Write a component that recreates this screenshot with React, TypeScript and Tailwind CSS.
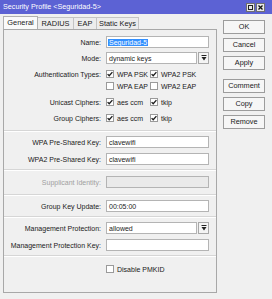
import React from "react";

const Check = ({ checked }: { checked?: boolean }) => (
  <span className="w-[8px] h-[8px] border border-[#9a9a9a] bg-white flex items-center justify-center shrink-0">
    {checked && (
      <svg width="6" height="6" viewBox="0 0 6 6">
        <path d="M0.6 3.1 L2.2 4.7 L5.4 1.1" stroke="#1a1a1a" strokeWidth="1.3" fill="none" />
      </svg>
    )}
  </span>
);

const CheckItem = ({ checked, label, w }: { checked?: boolean; label: string; w?: string }) => (
  <div className={`flex items-center gap-[3px] ${w ?? ""}`}>
    <Check checked={checked} />
    <span>{label}</span>
  </div>
);

const DropBtn = () => (
  <span className="w-[12px] h-[12px] border border-[#a8a8a8] bg-[#f4f4f4] flex items-center justify-center">
    <svg width="6" height="6" viewBox="0 0 6 6">
      <rect x="0.5" y="0" width="5" height="1" fill="#222" />
      <path d="M0.5 2 L5.5 2 L3 5.5 Z" fill="#222" />
    </svg>
  </span>
);

const Row = ({ label, children, h = "h-[12px]", disabled }: { label: string; children?: React.ReactNode; h?: string; disabled?: boolean }) => (
  <div className={`flex items-center ${h}`}>
    <div className={`w-[99px] text-right pr-[2px] ${disabled ? "text-[#a0a0a0]" : ""}`}>{label}</div>
    <div className="ml-[3px] w-[103px] h-full flex items-center">{children}</div>
  </div>
);

const Input = ({ children, disabled }: { children?: React.ReactNode; disabled?: boolean }) => (
  <div className={`w-full h-full border border-[#b4b4b4] flex items-center px-[2px] ${disabled ? "bg-[#eaeaea]" : "bg-white"}`}>
    {children}
  </div>
);

const Sep = ({ mt, mb }: { mt: string; mb: string }) => (
  <div className={`${mt} ${mb} border-t border-[#d6d6d6] border-b border-b-white`} />
);

const Btn = ({ label, mt }: { label: string; mt: string }) => (
  <div className={`${mt} w-[42px] h-[14px] border border-[#9c9c9c] bg-[#f6f6f6] flex items-center justify-center text-[7.3px]`}>{label}</div>
);

export default function App() {
  return (
    <div
      className="w-[272px] h-[299px] bg-[#f0f0f0] text-[7px] text-[#1a1a1a] leading-none overflow-hidden relative"
      style={{ fontFamily: "'Liberation Sans', Arial, sans-serif" }}
    >
      <div className="h-[14px] bg-[#5c62d4] flex items-center justify-between px-[3px]">
        <span className="text-white text-[7.2px]">Security Profile &lt;Seguridad-5&gt;</span>
        <div className="flex gap-[1px] mr-[4px]">
          <span className="w-[9px] h-[9px] bg-[#e8e8e8] border border-[#707070] flex items-center justify-center">
            <span className="w-[5px] h-[5px] border border-[#222]" />
          </span>
          <span className="w-[9px] h-[9px] bg-[#e8e8e8] border border-[#707070] flex items-center justify-center">
            <svg width="5" height="5" viewBox="0 0 5 5">
              <path d="M0.5 0.5 L4.5 4.5 M4.5 0.5 L0.5 4.5" stroke="#111" strokeWidth="1.3" />
            </svg>
          </span>
        </div>
      </div>
      <div className="flex">
        <div className="ml-[3px] w-[214px]">
          <div className="mt-[2px] h-[13px] flex items-end text-[7.4px]">
            <div className="h-[13px] w-[35px] bg-[#fafafa] border border-b-0 border-[#b0b0b0] flex items-center justify-center">General</div>
            <div className="h-[12px] w-[36px] bg-[#ececec] border-t border-r border-[#c4c4c4] flex items-center justify-center">RADIUS</div>
            <div className="h-[12px] w-[23px] bg-[#ececec] border-t border-r border-[#c4c4c4] flex items-center justify-center">EAP</div>
            <div className="h-[12px] w-[42px] bg-[#ececec] border-t border-r border-[#c4c4c4] flex items-center justify-center">Static Keys</div>
          </div>
          <div className="h-[264px] border border-[#a8a8a8] bg-[#f0f0f0] pt-[6px]">
            <Row label="Name:">
              <Input>
                <span className="bg-[#3390ff] text-white px-[1px] -ml-[1px]">Seguridad-5</span>
              </Input>
            </Row>
            <div className="mt-[4px]">
              <Row label="Mode:">
                <div className="flex w-full h-full gap-[1px]">
                  <Input>dynamic keys</Input>
                  <DropBtn />
                </div>
              </Row>
            </div>
            <div className="mt-[4px]">
              <Row label="Authentication Types:">
                <CheckItem checked label="WPA PSK" w="w-[44px]" />
                <CheckItem checked label="WPA2 PSK" />
              </Row>
              <Row label="">
                <CheckItem label="WPA EAP" w="w-[44px]" />
                <CheckItem label="WPA2 EAP" />
              </Row>
            </div>
            <div className="mt-[4px]">
              <Row label="Unicast Ciphers:">
                <CheckItem checked label="aes ccm" w="w-[44px]" />
                <CheckItem checked label="tkip" />
              </Row>
            </div>
            <div className="mt-[4px]">
              <Row label="Group Ciphers:">
                <CheckItem checked label="aes ccm" w="w-[44px]" />
                <CheckItem checked label="tkip" />
              </Row>
            </div>
            <Sep mt="mt-[6px]" mb="mb-[4px]" />
            <Row label="WPA Pre-Shared Key:">
              <Input>clavewifi</Input>
            </Row>
            <div className="mt-[5px]">
              <Row label="WPA2 Pre-Shared Key:">
                <Input>clavewifi</Input>
              </Row>
            </div>
            <Sep mt="mt-[4px]" mb="mb-[5px]" />
            <Row label="Supplicant Identity:" disabled>
              <Input disabled />
            </Row>
            <Sep mt="mt-[6px]" mb="mb-[4px]" />
            <Row label="Group Key Update:">
              <Input>00:05:00</Input>
            </Row>
            <Sep mt="mt-[4px]" mb="mb-[4px]" />
            <Row label="Management Protection:">
              <div className="flex w-full h-full gap-[1px]">
                <Input>allowed</Input>
                <DropBtn />
              </div>
            </Row>
            <div className="mt-[5px]">
              <Row label="Management Protection Key:">
                <Input />
              </Row>
            </div>
            <Sep mt="mt-[4px]" mb="mb-[6px]" />
            <Row label="">
              <CheckItem label="Disable PMKID" />
            </Row>
          </div>
        </div>
        <div className="ml-[6px] flex flex-col">
          <Btn label="OK" mt="mt-[6px]" />
          <Btn label="Cancel" mt="mt-[4px]" />
          <Btn label="Apply" mt="mt-[4px]" />
          <Btn label="Comment" mt="mt-[9px]" />
          <Btn label="Copy" mt="mt-[4px]" />
          <Btn label="Remove" mt="mt-[4px]" />
        </div>
      </div>
    </div>
  );
}
